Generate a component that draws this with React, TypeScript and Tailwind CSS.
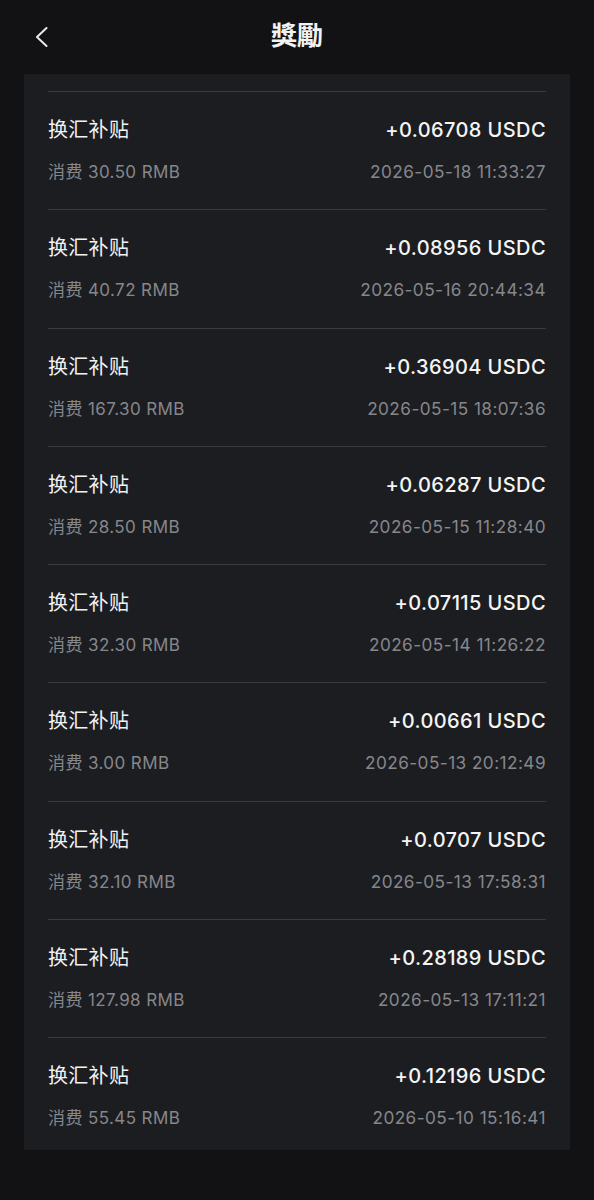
import React from "react";

interface Reward {
  spend: string;
  amount: string;
  time: string;
}

const rewards: Reward[] = [
  { spend: "30.50", amount: "+0.06708", time: "2026-05-18 11:33:27" },
  { spend: "40.72", amount: "+0.08956", time: "2026-05-16 20:44:34" },
  { spend: "167.30", amount: "+0.36904", time: "2026-05-15 18:07:36" },
  { spend: "28.50", amount: "+0.06287", time: "2026-05-15 11:28:40" },
  { spend: "32.30", amount: "+0.07115", time: "2026-05-14 11:26:22" },
  { spend: "3.00", amount: "+0.00661", time: "2026-05-13 20:12:49" },
  { spend: "32.10", amount: "+0.0707", time: "2026-05-13 17:58:31" },
  { spend: "127.98", amount: "+0.28189", time: "2026-05-13 17:11:21" },
  { spend: "55.45", amount: "+0.12196", time: "2026-05-10 15:16:41" },
];

const font = { fontFamily: 'Inter, "Noto Sans CJK SC", sans-serif' };

const RewardRow: React.FC<{ item: Reward }> = ({ item }) => (
  <div className="border-t border-[#3a3b3f] pt-[26px] pb-[26.25px] last:pb-[21px]">
    <div className="flex h-[24px] items-center justify-between">
      <span className="text-[20px] leading-[24px] tracking-[0.3px] text-[#f2f2f2]">
        换汇补贴
      </span>
      <span className="text-[20px] leading-[24px] tracking-[0.4px] font-medium text-[#f5f5f5]">
        {item.amount} USDC
      </span>
    </div>
    <div className="mt-[19px] flex h-[22px] items-center justify-between">
      <span className="text-[17px] leading-[22px] tracking-[0.4px] text-[#86878b]">
        消费 {item.spend} RMB
      </span>
      <span className="text-[17.2px] leading-[22px] tracking-[0.45px] text-[#86878b]">
        {item.time}
      </span>
    </div>
  </div>
);

export default function App() {
  return (
    <div className="min-h-[1200px] w-full bg-[#121215]" style={font}>
      <header className="relative flex h-[74px] items-center justify-center">
        <button className="absolute top-[27px] left-[35px] p-0" aria-label="返回">
          <svg width="14" height="20" viewBox="0 0 14 20" fill="none">
            <polyline
              points="11.5,1 2,10 11.5,19"
              stroke="#e8e8e8"
              strokeWidth="2"
              strokeLinecap="round"
              strokeLinejoin="round"
            />
          </svg>
        </button>
        <h1
          className="-mt-[2px] text-[26px] leading-[30px] font-bold text-[#f2f2f2]"
          style={{ fontFamily: 'Inter, "Noto Sans CJK TC", sans-serif' }}
        >
          獎勵
        </h1>
      </header>
      <div className="mx-6 bg-[#1c1d21] px-6 pt-[17px]">
        {rewards.map((item, idx) => (
          <RewardRow key={idx} item={item} />
        ))}
      </div>
    </div>
  );
}
